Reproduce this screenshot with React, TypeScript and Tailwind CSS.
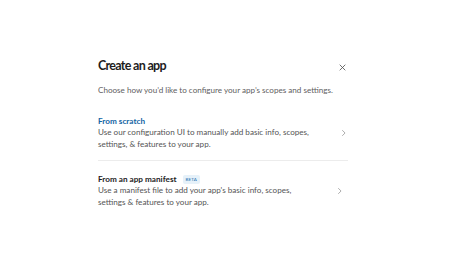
import React from 'react';

const Chevron = ({ className }: { className?: string }) => (
  <svg viewBox="0 0 8 12" className={className} fill="none" stroke="currentColor" strokeWidth="1.1">
    <path d="M2 1.5 6.5 6 2 10.5" />
  </svg>
);

const Option = ({
  title,
  titleClass,
  badge,
  lines,
  chevronClass,
}: {
  title: string;
  titleClass: string;
  badge?: boolean;
  lines: string[];
  chevronClass: string;
}) => (
  <div className="flex items-center">
    <div className="flex-1">
      <div className="flex items-center h-[12px]">
        <span className={`text-[8.2px] font-bold ${titleClass}`}>{title}</span>
        {badge && (
          <span className="ml-[6px] px-[3px] h-[9px] leading-[9px] text-[4.5px] tracking-wide text-[#1d6fb0] bg-[#e6f1f9] rounded-[2px]">
            BETA
          </span>
        )}
      </div>
      {lines.map((l) => (
        <div key={l} className="text-[8.1px] leading-[11.5px] text-[#555]">
          {l}
        </div>
      ))}
    </div>
    <Chevron className={`w-[5px] h-[8px] text-[#888] ${chevronClass}`} />
  </div>
);

export default function App() {
  return (
    <div
      className="w-[474px] h-[267px] bg-white overflow-hidden"
      style={{ fontFamily: 'Lato, "Open Sans", sans-serif' }}
    >
      <div className="ml-[98px] w-[250px] pt-[57px]">
        <div className="flex items-center justify-between h-[18px]">
          <h1 className="text-[12.5px] font-bold tracking-[-0.7px] text-[#1d1c1d]">Create an app</h1>
          <svg viewBox="0 0 10 10" className="w-[7px] h-[7px] mr-[2px] mt-[2px] text-[#555]" stroke="currentColor" strokeWidth="1.2">
            <path d="M1 1 9 9M9 1 1 9" />
          </svg>
        </div>
        <p className="mt-[9px] text-[8.1px] leading-[12px] text-[#616061]">
          Choose how you’d like to configure your app’s scopes and settings.
        </p>
        <div className="mt-[19px]">
          <Option
            title="From scratch"
            titleClass="text-[#1264a3]"
            lines={[
              'Use our configuration UI to manually add basic info, scopes,',
              'settings, & features to your app.',
            ]}
            chevronClass="mr-[2px]"
          />
        </div>
        <div className="mt-[10px] h-px bg-[#ececec]" />
        <div className="mt-[12px]">
          <Option
            title="From an app manifest"
            titleClass="text-[#1d1c1d]"
            badge
            lines={[
              "Use a manifest file to add your app's basic info, scopes,",
              'settings & features to your app.',
            ]}
            chevronClass="mr-[6px]"
          />
        </div>
      </div>
    </div>
  );
}
